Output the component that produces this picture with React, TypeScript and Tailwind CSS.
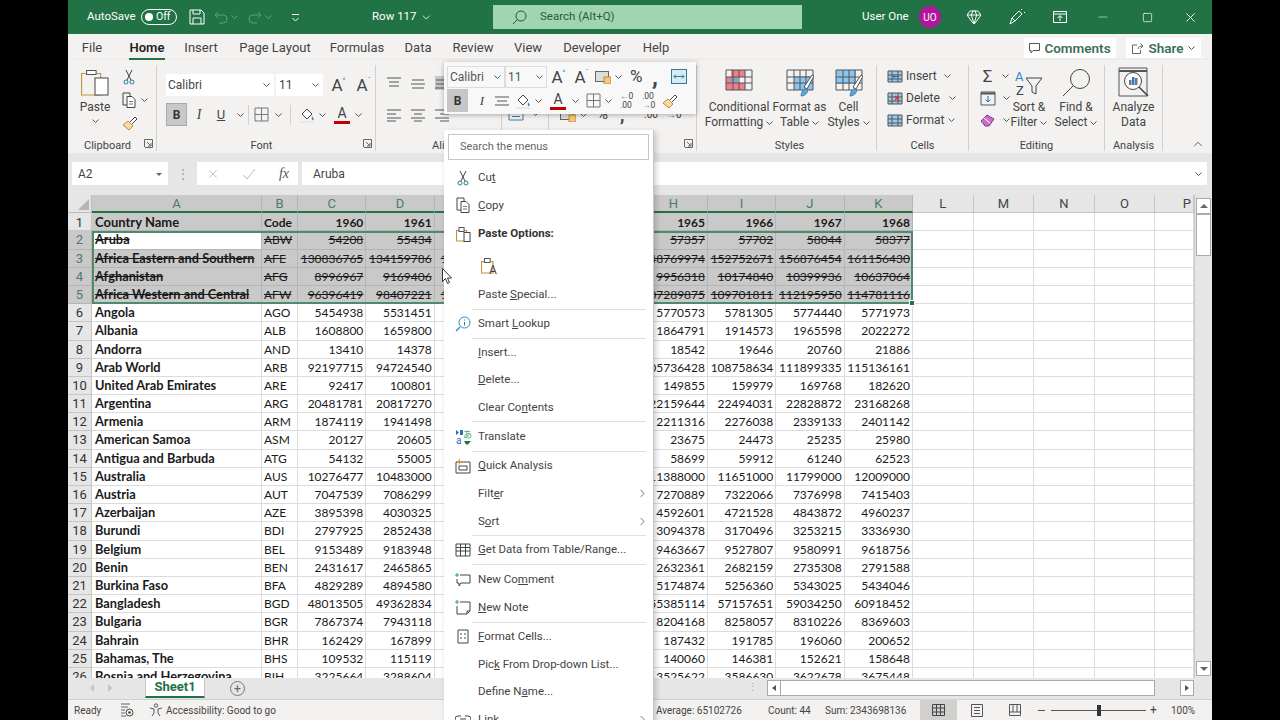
import { ChevronDown, ChevronRight, ChevronUp, Gem, Minus, Square, X } from "lucide-react";
import type { ReactNode } from "react";

type Row = [string, string, string, string, string, string, string, string, string];

const rows: Row[] = [
  ["Aruba", "ABW", "54208", "55434", "", "57357", "57702", "58044", "58377"],
  ["Africa Eastern and Southern", "AFE", "130836765", "134159786", "1", "148769974", "152752671", "156876454", "161156430"],
  ["Afghanistan", "AFG", "8996967", "9169406", "", "9956318", "10174840", "10399936", "10637064"],
  ["Africa Western and Central", "AFW", "96396419", "98407221", "1", "107289875", "109701811", "112195950", "114781116"],
  ["Angola", "AGO", "5454938", "5531451", "", "5770573", "5781305", "5774440", "5771973"],
  ["Albania", "ALB", "1608800", "1659800", "", "1864791", "1914573", "1965598", "2022272"],
  ["Andorra", "AND", "13410", "14378", "", "18542", "19646", "20760", "21886"],
  ["Arab World", "ARB", "92197715", "94724540", "", "105736428", "108758634", "111899335", "115136161"],
  ["United Arab Emirates", "ARE", "92417", "100801", "", "149855", "159979", "169768", "182620"],
  ["Argentina", "ARG", "20481781", "20817270", "", "22159644", "22494031", "22828872", "23168268"],
  ["Armenia", "ARM", "1874119", "1941498", "", "2211316", "2276038", "2339133", "2401142"],
  ["American Samoa", "ASM", "20127", "20605", "", "23675", "24473", "25235", "25980"],
  ["Antigua and Barbuda", "ATG", "54132", "55005", "", "58699", "59912", "61240", "62523"],
  ["Australia", "AUS", "10276477", "10483000", "", "11388000", "11651000", "11799000", "12009000"],
  ["Austria", "AUT", "7047539", "7086299", "", "7270889", "7322066", "7376998", "7415403"],
  ["Azerbaijan", "AZE", "3895398", "4030325", "", "4592601", "4721528", "4843872", "4960237"],
  ["Burundi", "BDI", "2797925", "2852438", "", "3094378", "3170496", "3253215", "3336930"],
  ["Belgium", "BEL", "9153489", "9183948", "", "9463667", "9527807", "9580991", "9618756"],
  ["Benin", "BEN", "2431617", "2465865", "", "2632361", "2682159", "2735308", "2791588"],
  ["Burkina Faso", "BFA", "4829289", "4894580", "", "5174874", "5256360", "5343025", "5434046"],
  ["Bangladesh", "BGD", "48013505", "49362834", "", "55385114", "57157651", "59034250", "60918452"],
  ["Bulgaria", "BGR", "7867374", "7943118", "", "8204168", "8258057", "8310226", "8369603"],
  ["Bahrain", "BHR", "162429", "167899", "", "187432", "191785", "196060", "200652"],
  ["Bahamas, The", "BHS", "109532", "115119", "", "140060", "146381", "152621", "158648"],
  ["Bosnia and Herzegovina", "BIH", "3225664", "3288604", "", "3525622", "3586630", "3622678", "3675448"],
];

const gridCols = "grid grid-cols-[24px_170px_36px_repeat(9,68.33px)_repeat(4,60.6px)_1fr] auto-rows-[18.2px]";

const Chev = ({ c = "#555" }: { c?: string }) => (
  <svg width="7" height="4" viewBox="0 0 7 4" className="shrink-0">
    <path d="M.5.5l3 3 3-3" stroke={c} fill="none" />
  </svg>
);

const Ic = ({ w = 16, h = 16, children }: { w?: number; h?: number; children: ReactNode }) => (
  <svg width={w} height={h} viewBox={`0 0 ${w} ${h}`} fill="none" className="shrink-0">
    {children}
  </svg>
);

const Lines = ({ d }: { d: string }) => (
  <Ic w={14} h={14}>
    <path d={d} stroke="#555" />
  </Ic>
);

const Scissors = () => (
  <Ic w={12} h={16}>
    <path d="M3 1l5 10M9 1L4 11" stroke="#444" />
    <circle cx="3" cy="13" r="2" stroke="#2b7c8c" />
    <circle cx="9" cy="13" r="2" stroke="#2b7c8c" />
  </Ic>
);

const CopyIcon = () => (
  <Ic w={15} h={16}>
    <path d="M6 13H1V1h7v3" stroke="#444" />
    <path d="M5 4.500h5l3 3v8H5z" fill="#fff" stroke="#444" />
    <path d="M7 9.500h4M7 12h4" stroke="#777" />
  </Ic>
);

const Brush = () => (
  <Ic w={16} h={16}>
    <path d="M1 10l5-4 5 5-4 4z" fill="#f6dca8" stroke="#c98a2b" />
    <path d="M8 7l5-5 2 2-5 5" fill="#fff" stroke="#444" />
  </Ic>
);

const Clip = ({ w, h, children }: { w: number; h: number; children?: ReactNode }) => (
  <Ic w={w} h={h}>
    <path d={`M${w * 0.2} 4.500H.5V${h - 1}H${w * 0.7}V4.500H${w * 0.56}`} stroke="#c2933f" strokeWidth="1.2" />
    <rect x={w * 0.2} y="1.500" width={w * 0.34} height="4" fill="#fff" stroke="#555" />
    {children}
  </Ic>
);

const TableIc = ({ fill }: { fill: "cf" | "tbl" | "cell" }) => (
  <svg width="28" height="28" viewBox="0 0 28 28" fill="none" className="shrink-0">
    {fill === "cf" && (
      <>
        <rect x="6" y="1" width="14" height="7" fill="#ef7f8b" />
        <rect x="6" y="8" width="7" height="6" fill="#8aa2c8" />
        <rect x="1" y="8" width="5" height="6" fill="#ef7f8b" />
        <rect x="1" y="14" width="5" height="7" fill="#ef7f8b" />
        <rect x="6" y="14" width="14" height="7" fill="#ef7f8b" />
      </>
    )}
    {fill === "tbl" && <rect x="8" y="7" width="19" height="14" fill="#8cc4ee" />}
    {fill === "cell" && <rect x="1" y="1" width="20" height="14" fill="#8cc4ee" />}
    <path d="M1 1h26v20H1zM1 8h26M1 14h26M8 1v20M14 1v20M20 1v20" stroke="#555" />
    {fill !== "cf" && (
      <>
        <path d="M18 18L26 6l2 1-7 13z" fill="#fff" stroke="#555" />
        <path d="M15 27c1-6 3-8 6-7 2 3-2 7-6 7z" fill="#5aa6de" stroke="#3f7fb0" />
      </>
    )}
  </svg>
);

const AnalyzeIc = () => (
  <svg width="32" height="32" viewBox="0 0 32 32" fill="none">
    <path d="M1 1h28v28H1z" stroke="#555" />
    <path d="M1 4h28" stroke="#555" strokeWidth="2" />
    <circle cx="15" cy="14" r="8.500" fill="#fff" stroke="#444" />
    <path d="M21 20l9 9" stroke="#444" strokeWidth="1.500" />
    <rect x="11" y="13" width="2.500" height="5" fill="#777" />
    <rect x="14" y="10" width="2.500" height="8" fill="#2e7bc6" />
    <rect x="17" y="11" width="2.500" height="7" fill="#777" />
  </svg>
);

const CellsIc = ({ kind }: { kind: "ins" | "del" | "fmt" }) => (
  <Ic w={16} h={15}>
    <rect x="1" y="2" width="14" height="11" fill="#9cc9ee" />
    <path d="M1 2h14v11H1zM1 6h14M1 10h14M5 2v11M11 2v11" stroke="#555" />
    {kind === "del" && <path d="M8 5l4 4m0-4l-4 4" stroke="#d13438" strokeWidth="1.300" />}
    {kind === "ins" && <path d="M12 7.500H6m2-2l-2 2 2 2" stroke="#1f6fb5" />}
  </Ic>
);

const UiLabel = ({ children }: { children: ReactNode }) => (
  <span className="text-[11px] leading-[14px] text-[#444]">{children}</span>
);

const Launcher = () => (
  <Ic w={9} h={9}>
    <path d="M.5 8V.5H8.500V8.500H1M3 3l4 4M7 4v3H4" stroke="#666" />
  </Ic>
);

// one group of the ribbon: body on top, caption at the bottom
const Group = ({
  cls,
  label,
  labelCls = "",
  launcher,
  children,
}: {
  cls: string;
  label: string;
  labelCls?: string;
  launcher?: boolean;
  children: ReactNode;
}) => (
  <div className={`flex h-full shrink-0 flex-col border-r border-[#d2d0ce] ${cls}`}>
    <div className="min-h-0 flex-1">{children}</div>
    <div className="flex h-[15px] items-center justify-center px-[3px]">
      {label && (
        <span className={`flex-1 text-center ${labelCls}`}>
          <UiLabel>{label}</UiLabel>
        </span>
      )}
      {!label && <span className="flex-1" />}
      {launcher && <Launcher />}
    </div>
  </div>
);

const BigBtn = ({ cls, a, b, icon, chev }: { cls: string; a: string; b: string; icon: ReactNode; chev?: boolean }) => (
  <div className={`flex shrink-0 flex-col items-center ${cls}`}>
    <div className="flex h-[35px] items-center justify-center">{icon}</div>
    <div className="whitespace-nowrap text-[12px] leading-[15px] text-[#444]">{a}</div>
    <div className="flex items-center gap-[3px] whitespace-nowrap text-[12px] leading-[15px] text-[#444]">
      {b}
      {chev && <Chev />}
    </div>
  </div>
);

const tabs = [
  ["File", "w-[36px]"],
  ["Home", "w-[74px]"],
  ["Insert", "w-[34px]"],
  ["Page Layout", "w-[114px]"],
  ["Formulas", "w-[50px]"],
  ["Data", "w-[72px]"],
  ["Review", "w-[38px]"],
  ["View", "w-[72px]"],
  ["Developer", "w-[56px]"],
  ["Help", "w-[72px]"],
];

const Sep = () => <div className="ml-[24px] mr-[3px] h-px shrink-0 bg-[#e1dfdd]" />;

const Item = ({
  icon,
  sub,
  h = "h-[27.500px]",
  children,
}: {
  icon?: ReactNode;
  sub?: boolean;
  h?: string;
  children: ReactNode;
}) => (
  <div className={`flex shrink-0 items-center text-[11.500px] text-[#444] ${h}`}>
    <span className="flex w-[30px] shrink-0 justify-center">{icon}</span>
    <span className="flex-1 whitespace-nowrap">{children}</span>
    {sub && <ChevronRight size={13} strokeWidth={1.5} className="text-[#555]" />}
  </div>
);

const Key = ({ children }: { children: ReactNode }) => <span className="underline">{children}</span>;

const ContextMenu = () => (
  <div className="absolute left-[376px] top-[130px] flex h-[600px] w-[210px] flex-col border-r border-[#c8c6c4] bg-white px-[4px] pt-[4px] shadow-[2px_2px_6px_rgba(0,0,0,0.2)]">
    <div className="flex h-[26px] w-[201px] shrink-0 items-center border border-[#c8c6c4] pl-[11px] text-[11px] text-[#666]">
      Search the menus
    </div>
    <div className="flex flex-col pt-[4px]">
      <Item icon={<Scissors />}>
        Cu<Key>t</Key>
      </Item>
      <Item icon={<CopyIcon />}>
        <Key>C</Key>opy
      </Item>
      <Item h="h-[30px]" icon={<Clip w={15} h={16}><rect x="8" y="6.500" width="6" height="9" fill="#fff" stroke="#444" /></Clip>}>
        <span className="font-bold text-[#333]">Paste Options:</span>
      </Item>
      <div className="flex h-[32px] shrink-0 items-center pl-[33px]">
        <Clip w={17} h={17}>
          <text x="8" y="16.500" fontSize="12" fill="#444" fontFamily="Roboto">A</text>
        </Clip>
      </div>
      <Item>
        Paste <Key>S</Key>pecial...
      </Item>
      <Sep />
      <Item h="h-[28px]" icon={
        <Ic w={16} h={16}>
          <circle cx="9.500" cy="6.500" r="5.500" stroke="#2b88c6" />
          <path d="M5 11l-4 4" stroke="#2b88c6" strokeWidth="1.300" />
          <path d="M9.500 6v3.500M9.500 3.500v1" stroke="#2e7d6f" />
        </Ic>
      }>
        Smart <Key>L</Key>ookup
      </Item>
      <Sep />
      <Item>
        <Key>I</Key>nsert...
      </Item>
      <Item>
        <Key>D</Key>elete...
      </Item>
      <Item>
        Clear Co<Key>n</Key>tents
      </Item>
      <Sep />
      <Item h="h-[29px]" icon={
        <Ic w={17} h={16}>
          <path d="M1 1v5l3-2.500z" fill="#2b6fb5" />
          <rect x="5" y="1" width="3" height="5" fill="#2b6fb5" />
          <text x="1" y="15" fontSize="10" fill="#2b6fb5" fontFamily="Roboto">a</text>
          <text x="8" y="9" fontSize="9" fill="#35a05c" fontFamily="Noto Sans CJK JP">あ</text>
          <path d="M9 12h7l-3 3.500h-2z" fill="#217346" />
        </Ic>
      }>
        Translate
      </Item>
      <Sep />
      <Item h="h-[28px]" icon={
        <Ic w={16} h={16}>
          <path d="M1 4h14v11H1zM4 8h8v4H4z" stroke="#444" />
          <path d="M5 0L2 5h2L3 8l4-5H5z" fill="#e8913a" />
        </Ic>
      }>
        <Key>Q</Key>uick Analysis
      </Item>
      <Item sub>
        Filt<Key>e</Key>r
      </Item>
      <Item sub>
        S<Key>o</Key>rt
      </Item>
      <Sep />
      <Item h="h-[28px]" icon={
        <Ic w={16} h={14}>
          <path d="M1 1h14v12H1zM1 4.500h14M1 8h14M5.500 1v12M10.500 1v12" stroke="#444" />
        </Ic>
      }>
        <Key>G</Key>et Data from Table/Range...
      </Item>
      <Sep />
      <Item h="h-[29px]" icon={
        <Ic w={16} h={14}>
          <path d="M5 2h10v8H6l-2 3v-3H2V6" stroke="#444" />
          <path d="M2 0v4M0 2h4" stroke="#35a05c" />
        </Ic>
      }>
        New Co<Key>m</Key>ment
      </Item>
      <Item icon={
        <Ic w={16} h={15}>
          <path d="M5 2h10v9l-3 3H2V6M12 14v-3h3" stroke="#444" />
          <path d="M2 0v4M0 2h4" stroke="#35a05c" />
        </Ic>
      }>
        <Key>N</Key>ew Note
      </Item>
      <Sep />
      <Item h="h-[28px]" icon={
        <Ic w={12} h={15}>
          <path d="M1 1h10v13H1zM3 5h2M3 9h2M7 5h2M7 9h2" stroke="#444" />
        </Ic>
      }>
        <Key>F</Key>ormat Cells...
      </Item>
      <Item>
        Pic<Key>k</Key> From Drop-down List...
      </Item>
      <Item>
        Define N<Key>a</Key>me...
      </Item>
      <Item sub icon={
        <Ic w={16} h={12}>
          <path d="M6 3H3a3 3 0 000 6h3M10 3h3a3 3 0 010 6h-3M5 6h6" stroke="#444" />
        </Ic>
      }>
        <Key>L</Key>ink
      </Item>
    </div>
  </div>
);

const SmallA = ({ up }: { up?: boolean }) => (
  <span className="flex w-[23px] shrink-0 items-start justify-center text-[17px] leading-[18px] text-[#444]">
    A<span className="text-[7px] leading-[10px] text-[#2b88c6]">{up ? "^" : "ˇ"}</span>
  </span>
);

const FontColor = () => (
  <span className="flex w-[16px] shrink-0 flex-col items-center">
    <span className="text-[14px] leading-[15px] text-[#444]">A</span>
    <span className="h-[3px] w-full bg-[#c00000]" />
  </span>
);

const Fill = () => (
  <Ic w={16} h={16}>
    <path d="M3 7l5-5 5 5-5 5z" fill="#fff" stroke="#444" />
    <path d="M13 9c1 2 2 2 1.500 3.500S12 13 13 9z" fill="#2b88c6" />
    <rect x="1" y="14" width="14" height="2" fill="#e8e8e8" />
  </Ic>
);

const Borders = () => (
  <Ic w={15} h={15}>
    <path d="M1 1h13v13H1zM7.500 1v13M1 7.500h13" stroke="#777" />
  </Ic>
);

const MiniToolbar = () => (
  <div className="absolute left-[376px] top-[62px] flex h-[52px] w-[252px] flex-col gap-[1px] bg-[#f8f8f8] px-[3px] pt-[3px] shadow-[0_1px_5px_rgba(0,0,0,0.3)]">
    <div className="flex h-[23px] items-center">
      <div className="flex h-[22px] w-[58px] items-center justify-between border border-[#dcdcdc] pl-[2px] pr-[3px] text-[12px] text-[#555]">
        Calibri <Chev />
      </div>
      <div className="flex h-[22px] w-[42px] items-center justify-between border border-[#dcdcdc] pl-[2px] pr-[3px] text-[12px] text-[#555]">
        11 <Chev />
      </div>
      <SmallA up />
      <SmallA />
      <span className="ml-[2px]">
        <Ic w={16} h={14}>
          <rect x=".5" y="1.500" width="13" height="10" fill="#ddd" stroke="#666" />
          <rect x="9" y="7" width="7" height="7" fill="#f3c983" stroke="#c98a2b" />
        </Ic>
      </span>
      <span className="ml-[4px]"><Chev /></span>
      <span className="ml-[8px] w-[16px] text-[17px] leading-none text-[#444]">%</span>
      <span className="ml-[6px] w-[12px] text-[24px] font-bold leading-[12px] text-[#444]">,</span>
      <span className="ml-[7px]">
        <Ic w={16} h={15}>
          <rect x=".5" y=".5" width="15" height="14" fill="#d6ebf7" stroke="#2e7d8c" />
          <path d="M3 7.500h10M3 7.500l2-2m-2 2l2 2m8-2l-2-2m2 2l-2 2" stroke="#2e7d8c" />
        </Ic>
      </span>
    </div>
    <div className="flex h-[23px] items-center">
      <div className="flex h-[23px] w-[21px] items-center justify-center bg-[#c6c6c6] text-[12px] font-bold text-[#333]">B</div>
      <span className="ml-[4px] w-[20px] text-center font-['Liberation_Serif',serif] text-[13px] italic text-[#444]">I</span>
      <span className="w-[22px] pl-[3px]"><Lines d="M0 3h14M2 7h10M0 11h14" /></span>
      <span className="ml-[1px] w-[20px]"><Fill /></span>
      <Chev />
      <span className="ml-[8px]"><FontColor /></span>
      <span className="ml-[6px]"><Chev /></span>
      <span className="ml-[7px]"><Borders /></span>
      <span className="ml-[4px]"><Chev /></span>
      <span className="ml-[8px] flex w-[20px] flex-col gap-[1px] text-[8.500px] leading-[8px] text-[#444]">
        <span><span className="text-[#2b88c6]">←</span>0</span>
        <span>.00</span>
      </span>
      <span className="ml-[2px] flex w-[18px] flex-col gap-[1px] text-[8.500px] leading-[8px] text-[#444]">
        <span>.00</span>
        <span><span className="text-[#2b88c6]">→</span>0</span>
      </span>
      <span className="ml-[2px]"><Brush /></span>
    </div>
  </div>
);

const Ribbon = () => (
  <div className="flex h-[93px] shrink-0 bg-[#f3f2f1] pb-[2px] pt-[5px] shadow-[0_1px_3px_rgba(0,0,0,0.2)]">
    <Group cls="w-[89px]" label="Clipboard" launcher>
      <div className="flex">
        <div className="flex w-[52px] flex-col items-center pl-[2px] pt-[4px]">
          <Clip w={28} h={27}>
            <rect x="14" y="9" width="13" height="17" fill="#fff" stroke="#444" />
          </Clip>
          <span className="mt-[4px] text-[12px] leading-[15px] text-[#444]">Paste</span>
          <span className="mt-[4px]"><Chev /></span>
        </div>
        <div className="flex flex-col gap-[7px] pl-[2px] pt-[4px]">
          <span className="pl-[1px]"><Scissors /></span>
          <span className="flex items-center gap-[4px]"><CopyIcon /><Chev /></span>
          <Brush />
        </div>
      </div>
    </Group>
    <Group cls="w-[219px]" label="Font" launcher>
      <div className="flex flex-col gap-[7px] pl-[9px] pt-[9px]">
        <div className="flex items-center gap-[2px]">
          <div className="flex h-[22px] w-[108px] items-center justify-between bg-white pl-[2px] pr-[4px] text-[12px] text-[#444]">
            Calibri <Chev />
          </div>
          <div className="flex h-[22px] w-[47px] items-center justify-between bg-white pl-[3px] pr-[4px] text-[12px] text-[#444]">
            11 <Chev />
          </div>
          <span className="ml-[2px]"><SmallA up /></span>
          <SmallA />
        </div>
        <div className="flex items-center">
          <div className="flex h-[23px] w-[21px] items-center justify-center border border-[#aaa] bg-[#c8c8c8] text-[12px] font-bold text-[#333]">B</div>
          <span className="w-[24px] text-center font-['Liberation_Serif',serif] text-[14px] italic text-[#444]">I</span>
          <span className="w-[20px] text-center text-[13px] leading-[15px] text-[#444] underline">U</span>
          <span className="ml-[6px]"><Chev /></span>
          <span className="ml-[4px] h-[20px] w-px bg-[#d2d0ce]" />
          <span className="ml-[5px]"><Borders /></span>
          <span className="ml-[6px]"><Chev /></span>
          <span className="ml-[8px] h-[20px] w-px bg-[#d2d0ce]" />
          <span className="ml-[8px]"><Fill /></span>
          <span className="ml-[4px]"><Chev /></span>
          <span className="ml-[8px]"><FontColor /></span>
          <span className="ml-[5px]"><Chev /></span>
        </div>
      </div>
    </Group>
    <Group cls="w-[173px]" label="Alignment" labelCls="pr-[10px]">
      <div className="flex h-full">
        <div className="flex w-[126px] flex-col gap-[18px] border-r border-[#d2d0ce] pl-[11px] pt-[11px]">
          <div className="flex items-center gap-[10px]">
            <Lines d="M0 2h14M2 6h10M2 10h10" />
            <Lines d="M1 4h12M0 8h14M1 12h12" />
            <span className="bg-[#c8c8c8]"><Lines d="M1 4h12M1 8h12M0 12h14" /></span>
          </div>
          <div className="flex items-center gap-[10px]">
            <Lines d="M0 2h14M0 6h9M0 10h14M0 13h9" />
            <Lines d="M0 2h14M3 6h8M0 10h14M3 13h8" />
            <Lines d="M0 2h14M5 6h9M0 10h14M5 13h9" />
          </div>
        </div>
        <div className="flex items-start gap-[8px] pl-[6px] pt-[42px]">
          <Ic w={16} h={14}>
            <path d="M1 1h14v12H1zM1 6h14" stroke="#3f7fb0" />
            <path d="M4 9.500h8" stroke="#3f7fb0" />
          </Ic>
          <span className="pt-[5px]"><Chev /></span>
        </div>
      </div>
    </Group>
    <Group cls="w-[148px]" label="" launcher>
      <div className="flex items-center pl-[11px] pt-[42px] text-[#444]">
        <Ic w={16} h={14}>
          <rect x=".5" y="1.500" width="13" height="10" fill="#ddd" stroke="#666" />
          <rect x="9" y="7" width="7" height="7" fill="#f3c983" stroke="#c98a2b" />
        </Ic>
        <span className="ml-[4px]"><Chev /></span>
        <span className="ml-[10px] w-[20px] text-[15px] leading-none">%</span>
        <span className="ml-[3px] w-[14px] text-[18px] font-bold leading-[8px]">,</span>
        <span className="ml-[10px] text-[10px] leading-none">.00</span>
        <span className="ml-[8px] text-[10px] leading-none"><span className="text-[#2b88c6]">→</span>0</span>
      </div>
    </Group>
    <Group cls="w-[180px] pl-[6px]" label="Styles">
      <div className="flex">
        <BigBtn cls="w-[72px]" a="Conditional" b="Formatting" chev icon={<TableIc fill="cf" />} />
        <BigBtn cls="w-[49px]" a="Format as" b="Table" chev icon={<TableIc fill="tbl" />} />
        <BigBtn cls="w-[49px]" a="Cell" b="Styles" chev icon={<TableIc fill="cell" />} />
      </div>
    </Group>
    <Group cls="w-[92px]" label="Cells">
      <div className="flex flex-col pl-[10px] text-[12px] text-[#444]">
        <div className="flex h-[22px] items-center gap-[3px]"><CellsIc kind="ins" />Insert<span className="ml-[4px]"><Chev /></span></div>
        <div className="flex h-[22px] items-center gap-[3px]"><CellsIc kind="del" />Delete<span className="ml-[6px]"><Chev /></span></div>
        <div className="flex h-[22px] items-center gap-[3px]"><CellsIc kind="fmt" />Format<span className="ml-[1px]"><Chev /></span></div>
      </div>
    </Group>
    <Group cls="w-[136px]" label="Editing">
      <div className="flex">
        <div className="flex w-[40px] flex-col pl-[11px]">
          <div className="flex h-[22px] items-center gap-[7px]">
            <span className="w-[16px] text-center text-[17px] leading-none text-[#444]">Σ</span>
            <Chev />
          </div>
          <div className="flex h-[22px] items-center gap-[7px]">
            <Ic w={16} h={15}>
              <path d="M1 1h14v13H1z" stroke="#555" />
              <path d="M1 2.500h14" stroke="#555" strokeWidth="2" />
              <path d="M8 5v6M5.500 8.500L8 11l2.500-2.500" stroke="#1f6fb5" />
            </Ic>
            <Chev />
          </div>
          <div className="flex h-[22px] items-center gap-[7px]">
            <Ic w={16} h={14}>
              <path d="M1 8l6-6 7 4-5 7H5z" fill="#c670c8" stroke="#8a3a8c" />
              <path d="M4 5l6 5" stroke="#fff" />
            </Ic>
            <Chev />
          </div>
        </div>
        <BigBtn cls="w-[40px]" a="Sort &" b="Filter" chev icon={
          <svg width="28" height="28" viewBox="0 0 28 28" fill="none">
            <text x="0" y="12" fontSize="13" fill="#2b88c6" fontFamily="Roboto">A</text>
            <text x="1" y="26" fontSize="13" fill="#444" fontFamily="Roboto">Z</text>
            <path d="M11 9h16l-6 8v8l-4-2v-6z" stroke="#444" />
          </svg>
        } />
        <BigBtn cls="w-[54px]" a="Find &" b="Select" chev icon={
          <svg width="30" height="30" viewBox="0 0 30 30" fill="none">
            <circle cx="19" cy="11" r="9.500" stroke="#444" />
            <path d="M12 18L2 28" stroke="#444" />
          </svg>
        } />
      </div>
    </Group>
    <Group cls="w-[58px]" label="Analysis">
      <BigBtn cls="w-full" a="Analyze" b="Data" icon={<AnalyzeIc />} />
    </Group>
    <div className="flex flex-1 items-end justify-end pr-[7px]">
      <ChevronUp size={14} strokeWidth={1.5} className="text-[#555]" />
    </div>
  </div>
);

const colHead = ["A", "B", "C", "D", "E", "F", "G", "H", "I", "J", "K"];
const colRest = ["L", "M", "N", "O", "P"];

const Sheet = () => (
  <div className="flex h-[483px] shrink-0 bg-white">
    <div className="relative min-w-0 flex-1 overflow-hidden">
      <div className={`${gridCols} font-['Lato',sans-serif] text-[12px] leading-[17px] text-[#1a1a1a]`}>
        {/* column letters */}
        <div className="flex items-end justify-end border-b border-r border-[#bbb] bg-[#e6e6e6] p-[2px]">
          <div className="h-0 w-0 border-b-[11px] border-l-[11px] border-b-[#b5b5b5] border-l-transparent" />
        </div>
        {colHead.map((c) => (
          <div key={c} className="border-r border-b-2 border-r-[#b5b5b5] border-b-[#217346] bg-[#c9c9c9] text-center font-['Roboto',sans-serif] text-[13px] leading-[18px] text-[#4f7a66]">
            {c}
          </div>
        ))}
        {colRest.map((c, i) => (
          <div key={c} className={`border-b border-r border-[#c6c6c6] bg-[#e6e6e6] font-['Roboto',sans-serif] text-[13px] leading-[18px] text-[#444] ${i === 4 ? "pr-[2px] text-right" : "text-center"}`}>
            {c}
          </div>
        ))}

        {/* header row */}
        <div className="border-b border-r border-[#c6c6c6] bg-[#e6e6e6] text-center font-['Roboto',sans-serif] text-[13px] leading-[19px] text-[#333]">1</div>
        <div className="border-b border-r border-[#b5b5b5] bg-[#c9c9c9] pl-[3px] text-[13px] font-bold leading-[19px]">Country Name</div>
        <div className="border-b border-r border-[#b5b5b5] bg-[#c9c9c9] pl-[2px] font-bold leading-[19px]">Code</div>
        {["1960", "1961", "", "", "", "1965", "1966", "1967", "1968"].map((y, i) => (
          <div key={i} className="border-b border-r border-[#b5b5b5] bg-[#c9c9c9] pr-[2px] text-right font-bold leading-[19px]">{y}</div>
        ))}
        {colRest.map((c) => (
          <div key={c} className="border-b border-r border-[#dcdcdc]" />
        ))}

        {rows.map((r, i) => {
          const sel = i < 4;
          const text = sel ? "bg-[#c9c9c9] line-through border-[#b5b5b5]" : "border-[#dcdcdc]";
          return [
            <div key={`h${i}`} className={`border-b border-r text-center font-['Roboto',sans-serif] text-[13px] ${sel ? "border-[#b5b5b5] bg-[#c9c9c9] text-[#4f7a66]" : "border-[#c6c6c6] bg-[#e6e6e6] text-[#333]"}`}>
              {i + 2}
            </div>,
            <div key={`a${i}`} className={`overflow-hidden whitespace-nowrap border-b border-r pl-[3px] text-[12.800px] font-bold ${text} ${i === 0 ? "bg-white" : ""}`}>{r[0]}</div>,
            <div key={`b${i}`} className={`border-b border-r pl-[2px] ${text}`}>{r[1]}</div>,
            <div key={`c${i}`} className={`border-b border-r pr-[2px] text-right ${text}`}>{r[2]}</div>,
            <div key={`d${i}`} className={`border-b border-r pr-[2px] text-right ${text}`}>{r[3]}</div>,
            <div key={`e${i}`} className={`border-b border-r pl-[6px] ${text}`}>{r[4]}</div>,
            <div key={`f${i}`} className={`border-b border-r ${text}`} />,
            <div key={`g${i}`} className={`border-b border-r ${text}`} />,
            ...[5, 6, 7, 8].map((k) => (
              <div key={`v${i}${k}`} className={`whitespace-nowrap border-b border-r pr-[2px] text-right ${text}`}>{r[k]}</div>
            )),
            ...colRest.map((c) => <div key={`${c}${i}`} className="border-b border-r border-[#dcdcdc]" />),
          ];
        })}
      </div>
      {/* selection outline */}
      <div className="absolute left-[24px] top-[36px] h-[73px] w-[821px] border-2 border-[#4f8a6c]">
        <div className="absolute -bottom-[4px] -right-[4px] h-[6px] w-[6px] border border-white bg-[#217346]" />
      </div>
    </div>
    {/* vertical scrollbar */}
    <div className="flex w-[18px] shrink-0 flex-col border-l border-[#c6c6c6] bg-[#e6e6e6] px-[1px] pt-[3px]">
      <div className="flex h-[16px] shrink-0 items-center justify-center border border-[#aaa] bg-white">
        <div className="h-0 w-0 border-x-[4px] border-b-[4px] border-x-transparent border-b-[#666]" />
      </div>
      <div className="h-[42px] shrink-0 border border-[#aaa] bg-white" />
      <div className="flex-1" />
      <div className="mb-[2px] flex h-[15px] shrink-0 items-center justify-center border border-[#aaa] bg-white">
        <div className="h-0 w-0 border-x-[4px] border-t-[4px] border-x-transparent border-t-[#666]" />
      </div>
    </div>
  </div>
);

export default function App() {
  return (
    <div className="flex h-screen w-full justify-center overflow-hidden bg-black font-['Roboto',sans-serif]">
      <div className="relative flex h-[720px] w-[1144px] flex-col overflow-hidden bg-[#e6e6e6]">
        {/* title bar */}
        <div className="flex h-[34px] shrink-0 items-center bg-[#217346] text-[11.500px] text-white">
          <span className="ml-[19px] w-[54px] whitespace-nowrap">AutoSave</span>
          <span className="flex h-[16px] w-[36px] items-center gap-[3px] rounded-full border border-white pl-[3px] text-[10.500px]">
            <span className="h-[8px] w-[8px] rounded-full bg-white" />
            Off
          </span>
          <span className="ml-[12px]">
            <Ic w={16} h={16}>
              <path d="M1 1h11l3 3v11H1zM4 1v4h7V1M4 15v-6h8v6" stroke="#fff" />
            </Ic>
          </span>
          <span className="ml-[8px] flex items-center gap-[2px] text-[#5f9e7c]">
            <Ic w={16} h={16}>
              <path d="M2 6h8a4 4 0 010 8H6M2 6l3-3M2 6l3 3" stroke="#5f9e7c" />
            </Ic>
            <Chev c="#5f9e7c" />
          </span>
          <span className="ml-[9px] flex items-center gap-[2px]">
            <Ic w={16} h={16}>
              <path d="M14 6H6a4 4 0 000 8h4M14 6l-3-3M14 6l-3 3" stroke="#5f9e7c" />
            </Ic>
            <Chev c="#5f9e7c" />
          </span>
          <span className="ml-[19px]">
            <Ic w={9} h={9}>
              <path d="M1 1.500h7M1.500 5L4.500 8l3-3" stroke="#fff" />
            </Ic>
          </span>
          <span className="ml-[72px] flex w-[60px] shrink-0 items-center gap-[3px] whitespace-nowrap">
            Row 117 <ChevronDown size={13} strokeWidth={1.5} />
          </span>
          <div className="ml-[61px] flex h-[24px] w-[309px] items-center bg-[#a1d5b1] pl-[19px] text-[#2b5a40]">
            <Ic w={15} h={15}>
              <circle cx="9" cy="6" r="5" stroke="#1f5c3a" />
              <path d="M5.500 9.500L1 14" stroke="#1f5c3a" />
            </Ic>
            <span className="ml-[13px]">Search (Alt+Q)</span>
          </div>
          <span className="ml-[60px] w-[57px] whitespace-nowrap">User One</span>
          <span className="flex h-[22px] w-[22px] items-center justify-center rounded-full bg-[#b4159e] text-[10px]">UO</span>
          <span className="ml-[25px]"><Gem size={16} strokeWidth={1.5} /></span>
          <span className="ml-[27px]">
            <Ic w={16} h={16}>
              <path d="M1 15l2-6 7-7 3 3-7 7zM3 9l3 3M12 1l1-1M15 4l1-1" stroke="#fff" />
            </Ic>
          </span>
          <span className="ml-[28px]">
            <Ic w={14} h={12}>
              <path d="M.5.500h13v11H.5zM.5 3h13M7 10V5M4.500 7L7 4.500 9.500 7" stroke="#fff" />
            </Ic>
          </span>
          <Minus size={14} strokeWidth={1.5} className="ml-[29px] text-[#a7cdb8]" />
          <Square size={11} strokeWidth={1.5} className="ml-[32px]" />
          <X size={15} strokeWidth={1.5} className="ml-[30px]" />
        </div>

        {/* tabs */}
        <div className="flex h-[26px] shrink-0 items-stretch bg-[#f3f2f1] pl-[6px] text-[13px] text-[#444]">
          {tabs.map(([t, w]) => (
            <div key={t} className={`relative flex shrink-0 items-center justify-center whitespace-nowrap pt-[2px] ${w} ${t === "Home" ? "font-semibold text-[#222]" : ""}`}>
              {t}
              {t === "Home" && <span className="absolute bottom-0 h-[2px] w-[36px] bg-[#217346]" />}
            </div>
          ))}
          <div className="ml-auto mr-[11px] flex items-center gap-[10px] pt-[2px] text-[13.500px] font-semibold text-[#3c6e56]">
            <span className="flex h-[20px] w-[92px] items-center justify-center gap-[4px] bg-white">
              <Ic w={11} h={11}>
                <path d="M.5.500h10v7H4l-2 2.500V7.500H.5z" stroke="#555" />
              </Ic>
              Comments
            </span>
            <span className="flex h-[20px] w-[75px] items-center justify-center gap-[4px] bg-white">
              <Ic w={12} h={11}>
                <path d="M5 2H.5v8.500h8V7M6 6c0-2 2-3 5-3M8.500.500L11 3 8.500 5.500" stroke="#666" />
              </Ic>
              Share
              <Chev />
            </span>
          </div>
        </div>

        <Ribbon />

        {/* formula bar */}
        <div className="flex h-[42px] shrink-0 items-start gap-[4px] bg-[#e6e6e6] pl-[4px] pr-[5px] pt-[9px] text-[12px] text-[#444]">
          <div className="flex h-[23px] w-[96px] items-center justify-between bg-white px-[6px] pt-[1px]">
            A2
            <div className="h-0 w-0 border-x-[3px] border-t-[3px] border-x-transparent border-t-[#666]" />
          </div>
          <div className="flex h-[23px] w-[21px] items-center justify-center text-[#999]">⋮</div>
          <div className="flex h-[23px] w-[101px] items-center justify-between bg-white px-[9px] text-[#aaa]">
            <X size={14} strokeWidth={1.2} />
            <Ic w={14} h={14}>
              <path d="M1 8l4 4 8-10" stroke="#bbb" />
            </Ic>
            <span className="font-['Liberation_Serif',serif] text-[14px] italic text-[#555]">fx</span>
          </div>
          <div className="flex h-[23px] flex-1 items-center justify-between bg-white pl-[11px] pr-[5px] pt-[1px]">
            Aruba
            <Chev />
          </div>
        </div>

        <Sheet />

        {/* sheet tabs + horizontal scrollbar */}
        <div className="flex h-[22px] shrink-0 items-start border-b border-[#d2d0ce] bg-[#e6e6e6]">
          <span className="ml-[22px] mt-[6px] flex w-[32px] gap-[14px] text-[#c4c4c4]">
            <span className="h-0 w-0 border-y-[4px] border-r-[4px] border-y-transparent border-r-[#c4c4c4]" />
            <span className="h-0 w-0 border-y-[4px] border-l-[4px] border-y-transparent border-l-[#c4c4c4]" />
          </span>
          <div className="ml-[23px] flex h-[20px] w-[60px] items-center justify-center border-b-2 border-x border-x-[#c6c6c6] border-b-[#217346] bg-white text-[13px] font-bold text-[#217346]">
            Sheet1
          </div>
          <span className="ml-[25px] mt-[3px] flex h-[15px] w-[15px] items-center justify-center rounded-full border border-[#777] text-[12px] leading-none text-[#666]">+</span>
          <span className="ml-[502px] mt-[3px] text-[11px] leading-[14px] text-[#aaa]">⋮</span>
          <div className="ml-[9px] mt-[2px] flex h-[16px] w-[427px] items-center">
            <div className="flex h-[16px] w-[14px] shrink-0 items-center justify-center border border-[#aaa] bg-white">
              <span className="h-0 w-0 border-y-[3px] border-r-[4px] border-y-transparent border-r-[#555]" />
            </div>
            <div className="h-[16px] w-[374px] border-y border-r border-[#aaa] bg-white" />
            <div className="flex-1" />
            <div className="flex h-[16px] w-[14px] shrink-0 items-center justify-center border border-[#aaa] bg-white">
              <span className="h-0 w-0 border-y-[3px] border-l-[4px] border-y-transparent border-l-[#555]" />
            </div>
          </div>
        </div>

        {/* status bar */}
        <div className="flex h-[20px] shrink-0 items-center bg-[#f3f2f1] text-[10px] text-[#444]">
          <span className="ml-[6px] w-[42px]">Ready</span>
          <span className="ml-[4px]">
            <Ic w={14} h={14}>
              <path d="M1 1h9M1 4h7M1 7h4M1 10h4M1 13h5" stroke="#666" />
              <circle cx="9.500" cy="9.500" r="3.500" stroke="#444" />
              <circle cx="9.500" cy="9.500" r="1.300" fill="#444" />
            </Ic>
          </span>
          <span className="ml-[15px]">
            <Ic w={14} h={14}>
              <circle cx="7" cy="2.500" r="1.700" stroke="#555" />
              <path d="M1 5l4 1v4l-2 3M13 5L9 6v4l2 3" stroke="#555" />
            </Ic>
          </span>
          <span className="ml-[3px] w-[110px] whitespace-nowrap">Accessibility: Good to go</span>
          <span className="ml-[380px] w-[112px] whitespace-nowrap">Average: 65102726</span>
          <span className="w-[57px] whitespace-nowrap">Count: 44</span>
          <span className="w-[95px] whitespace-nowrap">Sum: 2343698136</span>
          <span className="flex h-[20px] w-[37px] items-center justify-center bg-[#d2d0ce]">
            <Ic w={13} h={12}>
              <path d="M.5.500h12v11H.5zM.5 4h12M.5 8h12M4.500.500v11M8.500.500v11" stroke="#444" />
            </Ic>
          </span>
          <span className="ml-[14px]">
            <Ic w={12} h={13}>
              <path d="M.5.500h11v12H.5zM3 3.500h6M3 6.500h6M3 9.500h6" stroke="#555" />
            </Ic>
          </span>
          <span className="ml-[26px]">
            <Ic w={12} h={12}>
              <path d="M.5.500h11v11H.5zM.5 8h11M4 .500V8M8 .500V8" stroke="#555" />
            </Ic>
          </span>
          <span className="ml-[17px] flex w-[119px] items-center">
            <span className="h-px w-[7px] bg-[#555]" />
            <span className="ml-[6px] flex h-px w-[95px] items-center justify-center bg-[#555]">
              <span className="h-[11px] w-[4px] bg-[#333]" />
            </span>
            <span className="ml-[4px] text-[12px] leading-none">+</span>
          </span>
          <span className="ml-[14px]">100%</span>
        </div>

        <ContextMenu />
        <MiniToolbar />

        {/* mouse cursor */}
        <svg width="10" height="17" viewBox="0 0 10 17" className="absolute left-[374px] top-[268px]">
          <path d="M.5.500v13l3-3 2 5 2-1-2-4.500h4z" fill="#fff" stroke="#333" />
        </svg>
      </div>
    </div>
  );
}
